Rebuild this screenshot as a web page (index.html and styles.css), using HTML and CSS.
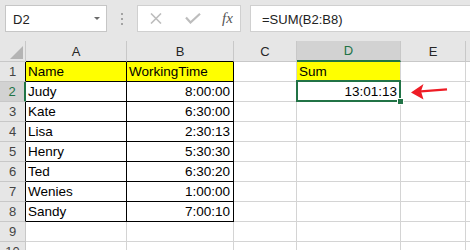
FILE: index.html
```html
<!DOCTYPE html>
<html lang="en">
<head>
  <meta charset="UTF-8" />
  <title>Sum of working time</title>
  <link rel="stylesheet" href="styles.css">
</head>
<body>
  <div class="app">

    <div class="formula-bar">
      <div class="name-box">
        <span>D2</span>
        <span class="caret"></span>
      </div>
      <svg class="grip" width="2" height="12" viewBox="0 0 2 12">
        <rect y="0" width="2" height="2"/>
        <rect y="5" width="2" height="2"/>
        <rect y="10" width="2" height="2"/>
      </svg>
      <div class="fx-box">
        <svg class="ico cancel" width="12" height="11" viewBox="0 0 12 11">
          <path d="M1 0.5 L11 10.5 M11 0.5 L1 10.5"/>
        </svg>
        <svg class="ico enter" width="16" height="11" viewBox="0 0 16 11">
          <path d="M1 4.5 L5.5 9.5 L15 0.8"/>
        </svg>
        <span class="fx">fx</span>
      </div>
      <div class="formula">=SUM(B2:B8)</div>
    </div>

    <div class="sheet">
      <div class="corner"></div>
      <div class="ch tb">A</div>
      <div class="ch tb">B</div>
      <div class="ch">C</div>
      <div class="ch sel">D</div>
      <div class="ch">E</div>
      <div class="ch"></div>

      <div class="rh tb">1</div>
      <div class="c y bx">Name</div>
      <div class="c y bx">WorkingTime</div>
      <div class="c"></div>
      <div class="c y">Sum</div>
      <div class="c"></div>
      <div class="c"></div>

      <div class="rh sel">2</div>
      <div class="c bx">Judy</div>
      <div class="c bx r">8:00:00</div>
      <div class="c"></div>
      <div class="c r active">13:01:13<span class="handle"></span></div>
      <div class="c"></div>
      <div class="c"></div>

      <div class="rh tb">3</div>
      <div class="c bx">Kate</div>
      <div class="c bx r">6:30:00</div>
      <div class="c"></div>
      <div class="c"></div>
      <div class="c"></div>
      <div class="c"></div>

      <div class="rh tb">4</div>
      <div class="c bx">Lisa</div>
      <div class="c bx r">2:30:13</div>
      <div class="c"></div>
      <div class="c"></div>
      <div class="c"></div>
      <div class="c"></div>

      <div class="rh tb">5</div>
      <div class="c bx">Henry</div>
      <div class="c bx r">5:30:30</div>
      <div class="c"></div>
      <div class="c"></div>
      <div class="c"></div>
      <div class="c"></div>

      <div class="rh tb">6</div>
      <div class="c bx">Ted</div>
      <div class="c bx r">6:30:20</div>
      <div class="c"></div>
      <div class="c"></div>
      <div class="c"></div>
      <div class="c"></div>

      <div class="rh tb">7</div>
      <div class="c bx">Wenies</div>
      <div class="c bx r">1:00:00</div>
      <div class="c"></div>
      <div class="c"></div>
      <div class="c"></div>
      <div class="c"></div>

      <div class="rh tb">8</div>
      <div class="c bx">Sandy</div>
      <div class="c bx r">7:00:10</div>
      <div class="c"></div>
      <div class="c"></div>
      <div class="c"></div>
      <div class="c"></div>

      <div class="rh">9</div>
      <div class="c"></div>
      <div class="c"></div>
      <div class="c"></div>
      <div class="c"></div>
      <div class="c"></div>
      <div class="c"></div>

      <div class="rh">10</div>
      <div class="c"></div>
      <div class="c"></div>
      <div class="c"></div>
      <div class="c"></div>
      <div class="c"></div>
      <div class="c"></div>
    </div>

    <svg class="arrow" width="45" height="24" viewBox="0 0 45 24">
      <polygon points="6,12.5 18.5,4 16,11.2 18.5,19.5"/>
      <path d="M16 11.3 L42 9.3"/>
    </svg>

  </div>
</body>
</html>
```

FILE: styles.css
```css
body {
  margin: 0;
  font-family: "Liberation Sans", Arial, sans-serif;
  background: #fff;
  color: #000;
  overflow: hidden;
}
.app {
  position: relative;
  width: 470px;
  height: 250px;
  overflow: hidden;
}

/* formula bar */
.formula-bar {
  height: 41px;
  box-sizing: border-box;
  background: #e6e6e6;
  display: flex;
  align-items: flex-start;
  padding: 5px 0 0 5px;
}
.name-box {
  width: 102px;
  height: 27px;
  box-sizing: border-box;
  background: #fff;
  border: 1px solid #c6c6c6;
  display: flex;
  align-items: center;
  justify-content: space-between;
  padding: 1px 6px 0 7px;
  font-size: 13px;
  color: #222;
}
.caret {
  border-left: 3px solid transparent;
  border-right: 3px solid transparent;
  border-top: 3px solid #6a6a6a;
  margin-top: -2px;
}
.grip {
  margin: 8px 14px 0 14px;
  fill: #a3a3a3;
}
.fx-box {
  width: 104px;
  height: 27px;
  box-sizing: border-box;
  background: #fff;
  border: 1px solid #d0d0d0;
  display: flex;
  align-items: center;
  padding-left: 12px;
}
.ico {
  fill: none;
  stroke: #bdbdbd;
  stroke-width: 1.6;
}
.enter {
  margin-left: 23px;
  stroke-width: 2.2;
}
.fx {
  margin-left: 21px;
  font-family: "Liberation Serif", serif;
  font-style: italic;
  font-size: 15px;
  color: #555;
}
.formula {
  flex: 1;
  margin-left: 9px;
  height: 27px;
  box-sizing: border-box;
  background: #fff;
  border: 1px solid #d0d0d0;
  border-right: 0;
  padding: 1px 0 0 11px;
  line-height: 25px;
  font-size: 13px;
  color: #222;
}

/* sheet grid */
.sheet {
  display: grid;
  grid-template-columns: 26px 101px 107px 63px 104px 65px 1fr;
  grid-template-rows: 21px;
  grid-auto-rows: 20px;
  font-size: 13.5px;
}
.sheet > div {
  box-sizing: border-box;
  border-right: 1px solid #d4d4d4;
  border-bottom: 1px solid #d4d4d4;
  white-space: nowrap;
}
.corner, .ch, .rh {
  background: #e6e6e6;
  border-color: #c8c8c8 !important;
  display: flex;
  align-items: center;
  justify-content: center;
  font-size: 13px;
}
.ch { color: #262626; }
.rh { color: #444; }
.corner {
  justify-content: flex-end;
  align-items: flex-end;
  padding: 0 2px 2px 0;
}
.corner::after {
  content: "";
  border-left: 13px solid transparent;
  border-bottom: 13px solid #b4b4b4;
}
.sheet > .ch.tb { border-bottom-color: #000 !important; }
.sheet > .rh.tb { border-right-color: #000 !important; }
.sheet > .ch.sel {
  background: #d2d2d2;
  color: #217346;
  border-bottom: 2px solid #217346 !important;
}
.sheet > .rh.sel {
  background: #d2d2d2;
  color: #217346;
  border-right: 2px solid #217346 !important;
}

.c {
  display: flex;
  align-items: flex-end;
  padding: 0 3px 1px 2px;
  line-height: 16px;
}
.c.r { justify-content: flex-end; }
.y { background: #ffff00; }
.sheet > .bx {
  border-right-color: #000;
  border-bottom-color: #000;
}
.active { position: relative; }
.active::after {
  content: "";
  position: absolute;
  top: -2px;
  left: -1px;
  right: -1px;
  bottom: -1px;
  border: 2px solid #217346;
}
.handle {
  position: absolute;
  right: -4px;
  bottom: -4px;
  width: 5px;
  height: 5px;
  background: #217346;
  border: 1px solid #fff;
  z-index: 1;
}

/* red pointer */
.arrow {
  position: absolute;
  left: 405px;
  top: 80px;
}
.arrow polygon { fill: #ee1c25; }
.arrow path {
  stroke: #ee1c25;
  stroke-width: 2.2;
  fill: none;
}
```
